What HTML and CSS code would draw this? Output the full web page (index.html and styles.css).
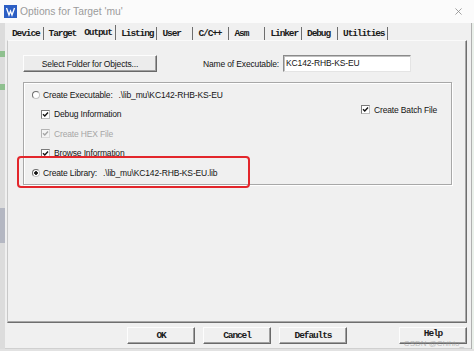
FILE: index.html
```html
<!DOCTYPE html>
<html>
<head>
<meta charset="utf-8">
<title>Options for Target 'mu'</title>
<link rel="stylesheet" href="styles.css">
</head>
<body>
<div class="titlebar">
  <svg class="app-icon" viewBox="0 0 13 13"><rect width="13" height="13" fill="#2d5fc4"/><path d="M2.5 3 L5 10 L6.5 6 L8 10 L10.5 3" fill="none" stroke="#fff" stroke-width="1.3"/></svg>
  <span class="title">Options for Target 'mu'</span>
  <svg class="close" viewBox="0 0 8 8"><path d="M0.5 0.5 L7.5 7.5 M7.5 0.5 L0.5 7.5" stroke="#8a8a8a" stroke-width="0.9"/></svg>
</div>
<div class="frame">
  <div class="side-strip"></div>
  <div class="dialog">
    <div class="tabs">
      <span class="tab">Device</span>
      <span class="tab pre">Target</span>
      <span class="tab active">Output</span>
      <span class="tab">Listing</span>
      <span class="tab">User</span>
      <span class="tab">C/C++</span>
      <span class="tab">Asm</span>
      <span class="tab">Linker</span>
      <span class="tab">Debug</span>
      <span class="tab">Utilities</span>
    </div>
    <div class="panel">
      <div class="top-row">
        <div class="btn folder-btn">Select Folder for Objects...</div>
        <span class="name-label">Name of Executable:</span>
        <div class="textbox">KC142-RHB-KS-EU</div>
      </div>
      <div class="group">
        <div class="group-left">
          <div class="row"><span class="radio"></span><span>Create Executable:</span><span class="path">.\lib_mu\KC142-RHB-KS-EU</span></div>
          <div class="row sub"><span class="check"><svg viewBox="0 0 7 7"><path d="M1 3.2 L2.8 5 L6 1.6"/></svg></span>Debug Information</div>
          <div class="row sub disabled"><span class="check"><svg viewBox="0 0 7 7"><path d="M1 3.2 L2.8 5 L6 1.6"/></svg></span>Create HEX File</div>
          <div class="row sub"><span class="check"><svg viewBox="0 0 7 7"><path d="M1 3.2 L2.8 5 L6 1.6"/></svg></span>Browse Information</div>
          <div class="row"><span class="radio on"></span><span>Create Library:</span><span class="path">.\lib_mu\KC142-RHB-KS-EU.lib</span></div>
        </div>
        <div class="group-right">
          <div class="row"><span class="check"><svg viewBox="0 0 7 7"><path d="M1 3.2 L2.8 5 L6 1.6"/></svg></span>Create Batch File</div>
        </div>
      </div>
      <div class="highlight"></div>
    </div>
    <div class="buttons">
      <div class="btn cmd">OK</div>
      <div class="btn cmd">Cancel</div>
      <div class="btn cmd">Defaults</div>
      <div class="btn cmd help"><span class="help-label">Help</span></div>
      <span class="watermark">CSDN @Chihio_</span>
    </div>
  </div>
  <div class="right-edge"></div>
</div>
</body>
</html>
```
FILE: styles.css
```css
* { box-sizing: border-box; }
html, body { margin: 0; padding: 0; }
body {
  width: 474px;
  height: 351px;
  overflow: hidden;
  background: #e2e2e2;
  font-family: "Liberation Sans", Arial, sans-serif;
  font-size: 8.5px;
  letter-spacing: -0.15px;
  color: #141414;
}

.titlebar {
  height: 23px;
  background: #fbfbfb;
  display: flex;
  align-items: center;
  padding: 0 12px 0 4px;
}
.app-icon { width: 13px; height: 13px; flex: none; }
.title {
  flex: 1;
  margin-left: 3px;
  font-size: 10.3px;
  letter-spacing: 0;
  color: #9c9c9c;
}
.close { width: 7px; height: 7px; }

.frame {
  display: flex;
  height: 326px;
}
.side-strip {
  width: 5px;
  background: linear-gradient(to bottom,
    #dcdcdc 0, #dcdcdc 28px, #8fc08f 28px, #8fc08f 34px, #dcdcdc 34px,
    #dcdcdc 61px, #8fc08f 61px, #8fc08f 67px, #dcdcdc 67px,
    #dcdcdc 185px, #b4b7c2 185px, #b4b7c2 220px, #dcdcdc 220px);
}
.dialog {
  flex: 1;
  background: #f0f0f0;
  padding: 0 4px 0 2px;
  display: flex;
  flex-direction: column;
  border-bottom: 1px solid #d0d0d0;
}
.right-edge {
  width: 3px;
  border-left: 1px solid #b0b0b0;
  background: #eaf0ea;
}

/* tabs */
.tabs {
  height: 17px;
  display: flex;
  align-items: flex-end;
  font-family: "Liberation Mono", monospace;
  font-weight: bold;
  font-size: 9.5px;
  letter-spacing: -1.1px;
  color: #1a1a1a;
}
.tab {
  min-width: 36px;
  height: 13px;
  line-height: 13px;
  padding: 0 3px 0 5px;
  border-right: 1px solid #6e6e6e;
  white-space: nowrap;
}
.tab.pre { border-right-color: transparent; }
.tab.active {
  height: 15px;
  line-height: 11px;
  padding: 2px 3px 0 4px;
}

/* panel */
.panel {
  position: relative;
  height: 283px;
  border: 1px solid;
  border-color: #fafafa #6e6e6e #6e6e6e #c8c8c8;
  box-shadow: inset -1px -1px #a8a8a8;
  padding: 14px 0 0 15px;
}
.top-row {
  display: flex;
  align-items: center;
  height: 17px;
}
.btn {
  background: #f0f0f0;
  border: 1px solid;
  border-color: #fdfdfd #696969 #696969 #fdfdfd;
  box-shadow: inset -1px -1px #a0a0a0;
  display: flex;
  align-items: center;
  justify-content: center;
  white-space: nowrap;
}
.folder-btn {
  width: 134px;
  height: 17px;
  margin-right: 46px;
  background: #ececec;
}
.name-label { margin-right: 4px; white-space: nowrap; }
.textbox {
  width: 128px;
  height: 17px;
  background: #fff;
  border: 1px solid;
  border-color: #8a8a8a #e4e4e4 #e4e4e4 #8a8a8a;
  box-shadow: inset 1px 1px #c0c0c0;
  padding: 1px 0 0 2px;
  line-height: 13px;
}

.group {
  margin-top: 10px;
  width: 429px;
  height: 103px;
  border: 1px solid #a8a8a8;
  box-shadow: inset 1px 1px #fff, 1px 1px #fff;
  display: flex;
  padding: 2px 0 0 8px;
}
.group-left { flex: 1; }
.group-right { width: 90px; padding-top: 15px; }
.row {
  height: 19.5px;
  display: flex;
  align-items: center;
  white-space: nowrap;
}
.row.sub { padding-left: 9px; }
.row.disabled { color: #a6a6a6; }
.path { margin-left: 6px; }

.radio {
  width: 8px;
  height: 8px;
  border-radius: 50%;
  border: 1px solid;
  border-color: #6e6e6e #c4c4c4 #c4c4c4 #6e6e6e;
  background: #fff;
  margin-right: 3px;
  flex: none;
}
.radio.on {
  background: radial-gradient(circle, #141414 0, #141414 1.5px, #fff 2px);
}
.check {
  width: 9px;
  height: 9px;
  border: 1px solid;
  border-color: #7a7a7a #bdbdbd #bdbdbd #7a7a7a;
  background: #fff;
  margin-right: 4px;
  flex: none;
  display: flex;
  align-items: center;
  justify-content: center;
}
.check svg {
  width: 7px;
  height: 7px;
  fill: none;
  stroke: #141414;
  stroke-width: 1.4;
}
.row.disabled .check { background: #f4f4f4; border-color: #b4b4b4 #dadada #dadada #b4b4b4; }
.row.disabled .check svg { stroke: #a6a6a6; }

.highlight {
  position: absolute;
  left: 9px;
  top: 115px;
  width: 233px;
  height: 32px;
  border: 2px solid #e3262b;
  border-radius: 4px;
}

/* bottom buttons */
.buttons {
  position: relative;
  display: flex;
  gap: 8px;
  margin-top: 4px;
  height: 17px;
  padding-left: 120px;
}
.cmd {
  width: 68px;
  height: 17px;
  font-family: "Liberation Mono", monospace;
  font-weight: bold;
  font-size: 9.5px;
  letter-spacing: -1.1px;
  color: #1a1a1a;
}
.help { margin-left: auto; align-items: flex-start; padding-top: 2px; }
.help-label { line-height: 8px; }
.watermark {
  position: absolute;
  right: 3px;
  top: 13px;
  line-height: 7px;
  font-family: "Liberation Sans", Arial, sans-serif;
  font-size: 8px;
  letter-spacing: 0;
  color: rgba(150, 150, 150, 0.65);
  white-space: nowrap;
}
```
